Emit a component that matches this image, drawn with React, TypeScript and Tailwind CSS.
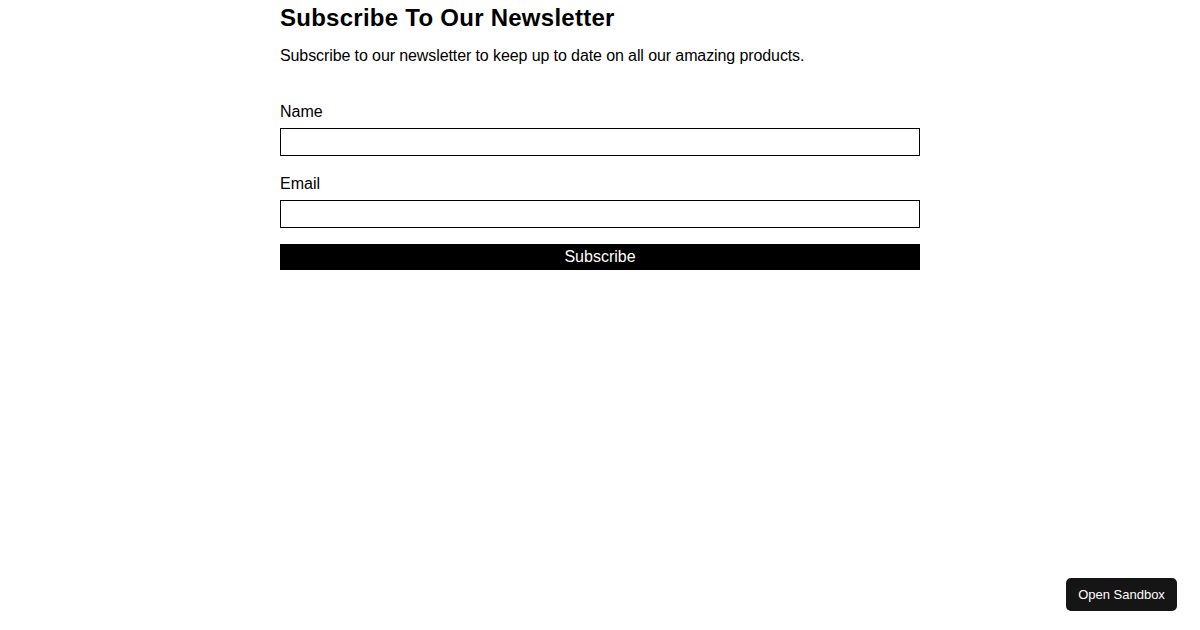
export default function App() {
  return (
    <div className="relative min-h-[630px] w-full bg-white text-black font-['Liberation_Sans',Arial,sans-serif]">
      <div className="mx-auto w-[640px] pt-1">
        <h1 className="text-2xl leading-7 font-bold tracking-[0.26px]">Subscribe To Our Newsletter</h1>
        <p className="mt-3 text-base leading-6 tracking-[-0.1px]">
          Subscribe to our newsletter to keep up to date on all our amazing products.
        </p>
        <form className="mt-8 flex flex-col" onSubmit={(e) => e.preventDefault()}>
          <label className="text-base leading-6 mb-1">Name</label>
          <input type="text" className="h-7 w-full border border-black bg-white px-1 outline-none" />
          <label className="mt-4 text-base leading-6 mb-1">Email</label>
          <input type="email" className="h-7 w-full border border-black bg-white px-1 outline-none" />
          <button type="submit" className="mt-4 h-[26px] w-full bg-black text-white text-base leading-6">
            Subscribe
          </button>
        </form>
      </div>
      <button className="absolute right-[23px] bottom-[19px] h-[33px] w-[111px] rounded-[5px] bg-[#151515] text-[13px] text-white font-['Liberation_Sans',Arial,sans-serif]">
        Open Sandbox
      </button>
    </div>
  );
}
